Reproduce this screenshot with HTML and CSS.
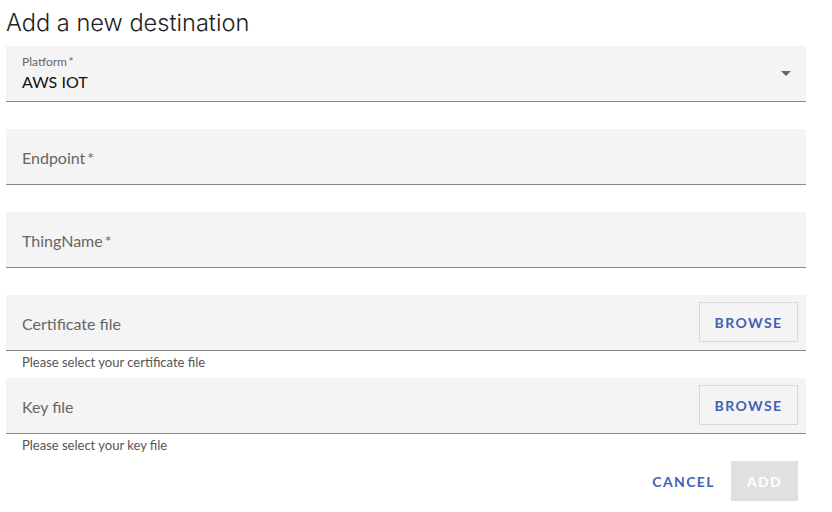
FILE: index.html
```html
<!DOCTYPE html>
<html>
<head>
<meta charset="utf-8">
<link rel="stylesheet" href="styles.css">
</head>
<body>
<div class="dialog">
  <h1 class="title">Add a new destination</h1>
  <div class="form">
    <div class="field select">
      <div class="select-text">
        <span class="small-label">Platform&thinsp;*</span>
        <span class="value">AWS IOT</span>
      </div>
      <svg class="arrow" width="10" height="5" viewBox="0 0 10 5"><path d="M0 0 L10 0 L5 5 Z" fill="#666"/></svg>
    </div>
    <div class="gap"></div>
    <div class="field"><span class="placeholder">Endpoint&thinsp;*</span></div>
    <div class="gap"></div>
    <div class="field"><span class="placeholder">ThingName&thinsp;*</span></div>
    <div class="gap"></div>
    <div class="field">
      <span class="placeholder">Certificate file</span>
      <button class="browse">BROWSE</button>
    </div>
    <div class="helper">Please select your certificate file</div>
    <div class="field">
      <span class="placeholder">Key file</span>
      <button class="browse">BROWSE</button>
    </div>
    <div class="helper">Please select your key file</div>
  </div>
  <div class="actions">
    <button class="btn-text">CANCEL</button>
    <button class="btn-add">ADD</button>
  </div>
</div>
</body>
</html>
```
FILE: styles.css
```css
html, body {
  margin: 0;
  padding: 0;
  background: #fff;
}
body {
  font-family: Lato, "Liberation Sans", sans-serif;
  width: 832px;
  height: 512px;
  overflow: hidden;
}
.dialog {
  padding: 0 26px 0 6px;
  display: flex;
  flex-direction: column;
}
.title {
  margin: 0;
  height: 46px;
  box-sizing: border-box;
  padding-top: 8px;
  font-family: Inter, "Noto Sans", sans-serif;
  font-weight: 300;
  font-size: 23.6px;
  line-height: 30px;
  color: #222;
  letter-spacing: 0;
}
.form {
  display: flex;
  flex-direction: column;
}
.field {
  height: 56px;
  box-sizing: border-box;
  background: #f4f4f4;
  border-bottom: 1px solid #8a8a8a;
  display: flex;
  align-items: center;
  justify-content: space-between;
  padding: 0 8px 0 16px;
}
.gap {
  height: 27px;
}
.placeholder {
  font-size: 16px;
  color: #666;
  padding-top: 1px;
}
.select {
  padding-right: 15px;
}
.select-text {
  display: flex;
  flex-direction: column;
  padding-top: 0;
}
.small-label {
  font-size: 12px;
  color: #666;
  line-height: 14px;
}
.value {
  font-size: 16px;
  color: #111;
  line-height: 20px;
  padding-top: 3px;
}
.arrow {
  display: block;
}
.browse {
  width: 99px;
  height: 40px;
  margin-top: -1px;
  background: #f4f4f4;
  border: 1px solid #d8d8d8;
  font-family: Lato, "Liberation Sans", sans-serif;
  font-weight: 700;
  font-size: 14px;
  letter-spacing: 1.4px;
  color: #4161b3;
  padding: 0;
}
.helper {
  height: 27px;
  box-sizing: border-box;
  padding: 3px 0 0 16px;
  font-size: 13px;
  color: #555;
  line-height: 16px;
}
.actions {
  display: flex;
  justify-content: flex-end;
  align-items: center;
  gap: 16px;
  padding-right: 8px;
}
.btn-text {
  background: none;
  border: none;
  font-family: Lato, "Liberation Sans", sans-serif;
  font-weight: 700;
  font-size: 14px;
  letter-spacing: 1.4px;
  color: #4161b3;
  padding: 0;
  height: 40px;
}
.btn-add {
  width: 67px;
  height: 40px;
  background: #e0e0e0;
  border: none;
  font-family: Lato, "Liberation Sans", sans-serif;
  font-weight: 700;
  font-size: 14px;
  letter-spacing: 1.4px;
  color: #fff;
  padding: 0;
}
```
